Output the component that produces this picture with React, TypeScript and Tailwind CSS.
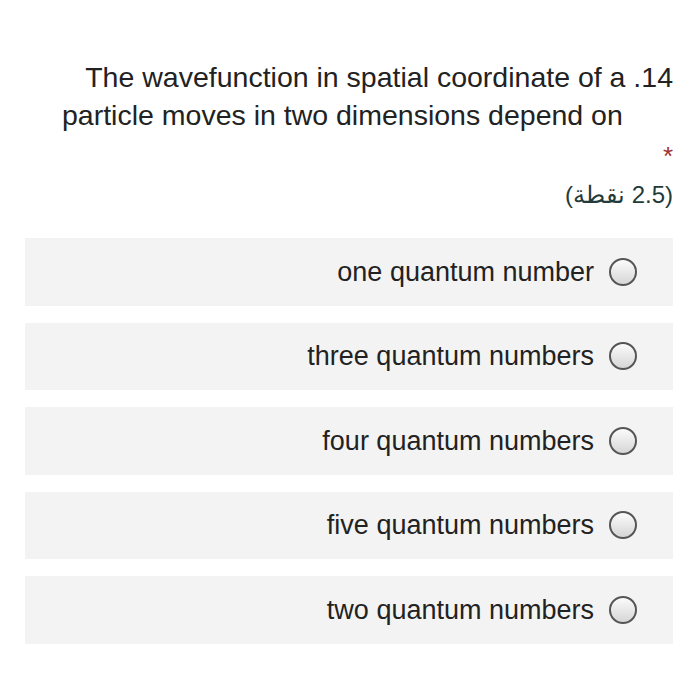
const options = [
  "one quantum number",
  "three quantum numbers",
  "four quantum numbers",
  "five quantum numbers",
  "two quantum numbers",
];

function Radio() {
  return (
    <span className="ml-[15px] inline-block h-[28px] w-[28px] shrink-0 rounded-full border-2 border-[#555] bg-gradient-to-b from-[#fbfbfb] to-[#d6d6d6]" />
  );
}

export default function App() {
  return (
    <div
      className="min-h-[697px] w-[700px] bg-white text-[#222]"
      style={{ fontFamily: '"Liberation Sans", Arial, sans-serif' }}
    >
      <div className="pl-[62px] pr-[27px] pt-[58px]">
        <p className="text-[28.5px] leading-[38px]">
          <span dir="rtl" className="block text-right">
            14. The wavefunction in spatial coordinate of a
          </span>
          <span className="block text-left">particle moves in two dimensions depend on</span>
        </p>
        <div className="mt-[10px] h-[20px] text-right text-[26px] leading-[24px] text-[#a0302c]">*</div>
        <div dir="rtl" className="mt-[16px] text-right text-[24px] leading-[30px] text-[#1f3b3a]">
          (2.5 نقطة)
        </div>
      </div>

      <div className="mt-[28px] flex flex-col gap-[17px] pl-[25px] pr-[27px]">
        {options.map((o) => (
          <div
            key={o}
            className="flex h-[67.5px] items-center justify-end bg-[#f3f3f3] pr-[36px]"
          >
            <span className="text-[27px] leading-[30px]">{o}</span>
            <Radio />
          </div>
        ))}
      </div>
    </div>
  );
}
